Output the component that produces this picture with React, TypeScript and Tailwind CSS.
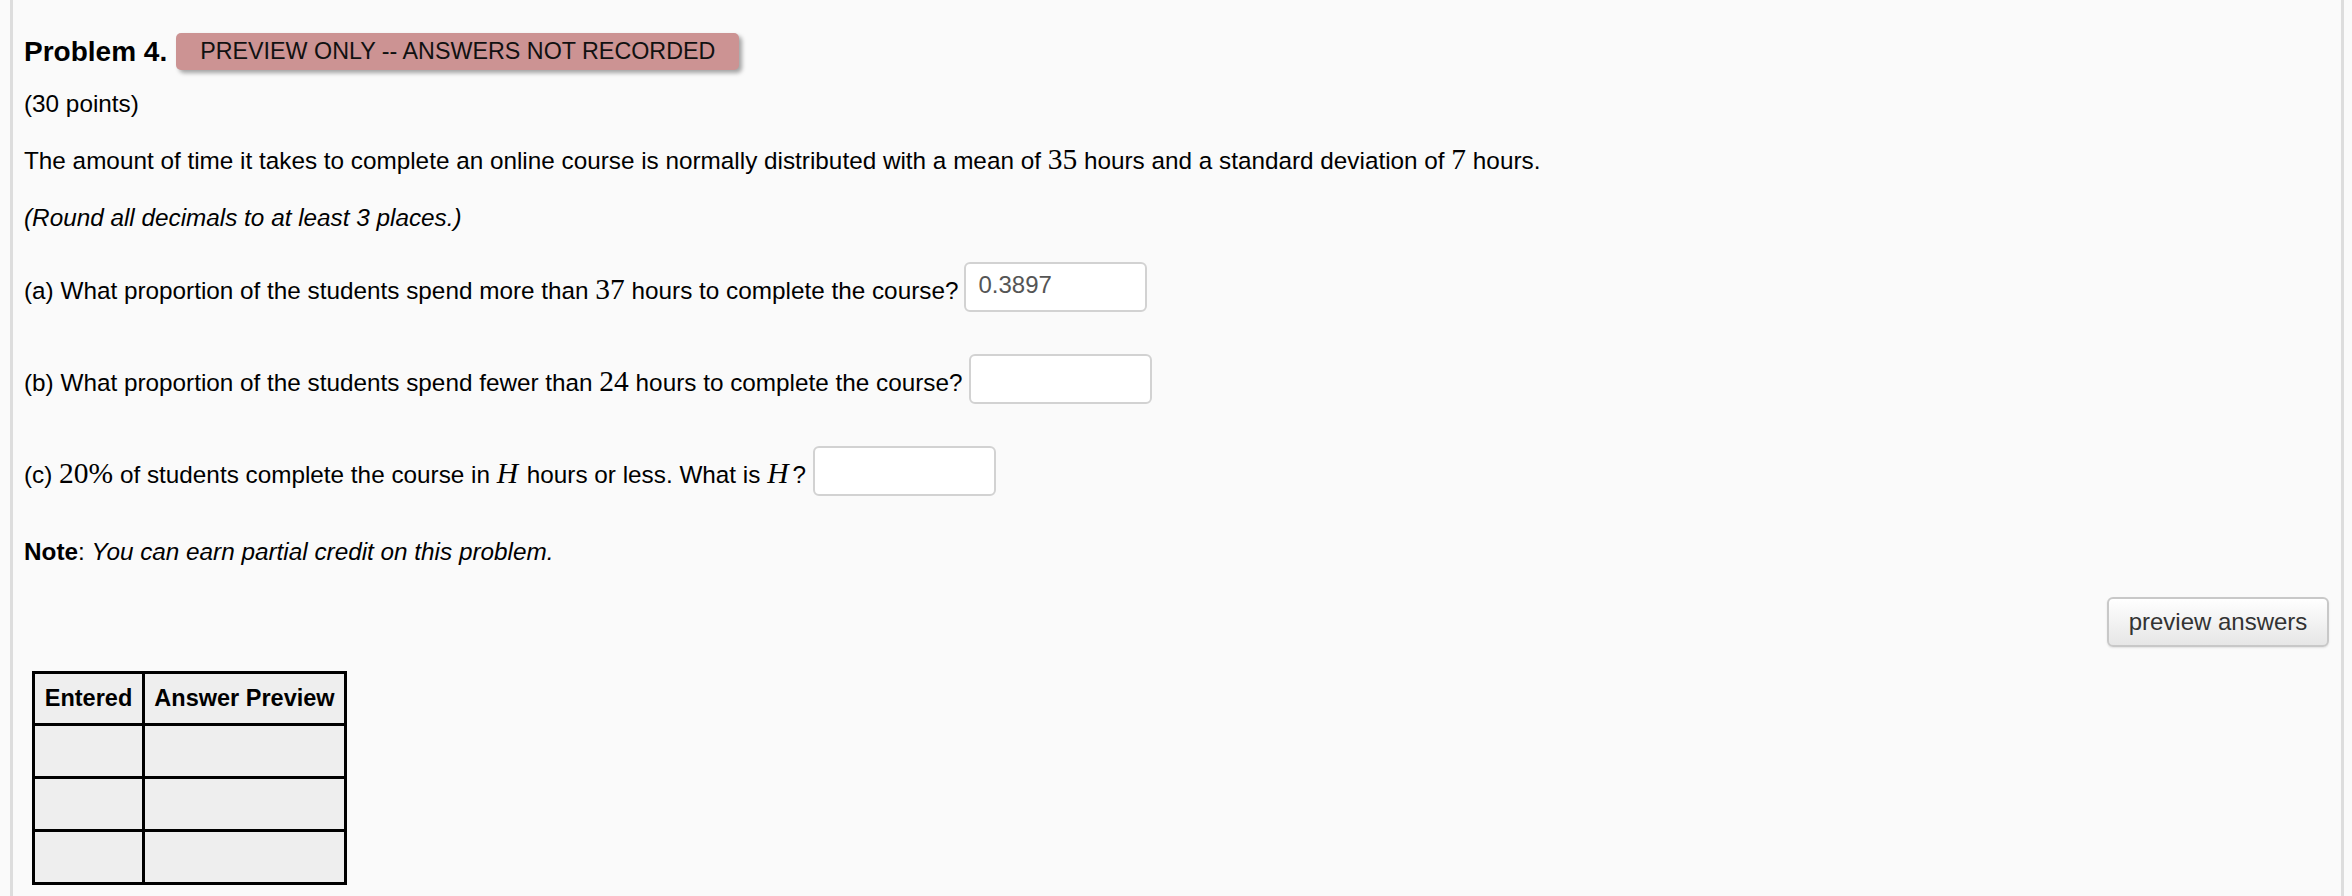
import React from "react";

const M = ({ children, italic }: { children: React.ReactNode; italic?: boolean }) => (
  <span
    className={`text-[29.5px] leading-none ${italic ? "italic mr-[2px]" : ""}`}
    style={{ fontFamily: '"Liberation Serif", "DejaVu Serif", serif' }}
  >
    {children}
  </span>
);

const Field = ({ value, className }: { value?: string; className?: string }) => (
  <div
    className={`w-[183px] h-[50px] bg-white border-2 border-[#d2d2d2] rounded-[6px] flex items-center pl-[12px] pb-[4px] text-[24px] text-[#555] ${className ?? ""}`}
  >
    {value}
  </div>
);

export default function App() {
  return (
    <div
      className="w-[2352px] h-[896px] bg-[#fafafa] overflow-hidden pl-[10px] pr-[8px] text-black"
      style={{ fontFamily: '"Liberation Sans", Arial, sans-serif' }}
    >
      <div className="h-full border-l-[3px] border-r-[3px] border-[#dddddd] pl-[11px] pr-[12px]">
        <div className="pt-[33px] flex items-center h-[70px]">
          <span className="font-bold text-[28px] leading-none">Problem 4.</span>
          <span className="ml-[9px] h-[37px] flex items-center px-[24px] bg-[#cc9393] rounded-[5px] text-[23.3px] text-[#111] shadow-[3px_3px_4px_rgba(0,0,0,0.35)]">
            PREVIEW ONLY -- ANSWERS NOT RECORDED
          </span>
        </div>

        <div className="mt-[19px] h-[30px] leading-[30px] text-[24.3px]">(30 points)</div>

        <div className="mt-[26px] h-[30px] leading-[30px] text-[24.3px]">
          The amount of time it takes to complete an online course is normally distributed with a mean of <M>35</M> hours and a
          standard deviation of <M>7</M> hours.
        </div>

        <div className="mt-[28px] h-[30px] leading-[30px] text-[24.3px] italic">(Round all decimals to at least 3 places.)</div>

        <div className="mt-[29px] h-[50px] flex items-center text-[24.3px]">
          <span className="mt-[8px]">
            (a) What proportion of the students spend more than <M>37</M> hours to complete the course?
          </span>
          <Field value="0.3897" className="ml-[6px]" />
        </div>

        <div className="mt-[42px] h-[50px] flex items-center text-[24.3px]">
          <span className="mt-[8px]">
            (b) What proportion of the students spend fewer than <M>24</M> hours to complete the course?
          </span>
          <Field className="ml-[7px]" />
        </div>

        <div className="mt-[42px] h-[50px] flex items-center text-[24.3px]">
          <span className="mt-[8px]">
            (c) <M>20%</M> of students complete the course in <M italic>H</M> hours or less. What is{" "}
            <M italic>H</M>
            <span className="ml-[2px]">?</span>
          </span>
          <Field className="ml-[7px]" />
        </div>

        <div className="mt-[41px] h-[30px] leading-[30px] text-[24.3px]">
          <span className="font-bold">Note</span>: <span className="italic">You can earn partial credit on this problem.</span>
        </div>

        <div className="mt-[30px] flex justify-end">
          <button className="w-[222px] h-[50px] border-2 border-[#c8c8c8] rounded-[6px] bg-gradient-to-b from-white to-[#e6e6e6] text-[24px] text-[#333] shadow-[0_1px_2px_rgba(0,0,0,0.1)]">
            preview answers
          </button>
        </div>

        <table className="mt-[24px] ml-[8px] border-collapse border-[3px] border-black text-[23.5px]">
          <thead>
            <tr className="h-[52px] bg-[#eeeeee]">
              <th className="w-[110px] border-[3px] border-black font-bold px-[6px]">Entered</th>
              <th className="w-[202px] border-[3px] border-black font-bold px-[6px]">Answer Preview</th>
            </tr>
          </thead>
          <tbody>
            {[0, 1, 2].map((i) => (
              <tr key={i} className="h-[53px] bg-[#eeeeee]">
                <td className="border-[3px] border-black"></td>
                <td className="border-[3px] border-black"></td>
              </tr>
            ))}
          </tbody>
        </table>
      </div>
    </div>
  );
}
